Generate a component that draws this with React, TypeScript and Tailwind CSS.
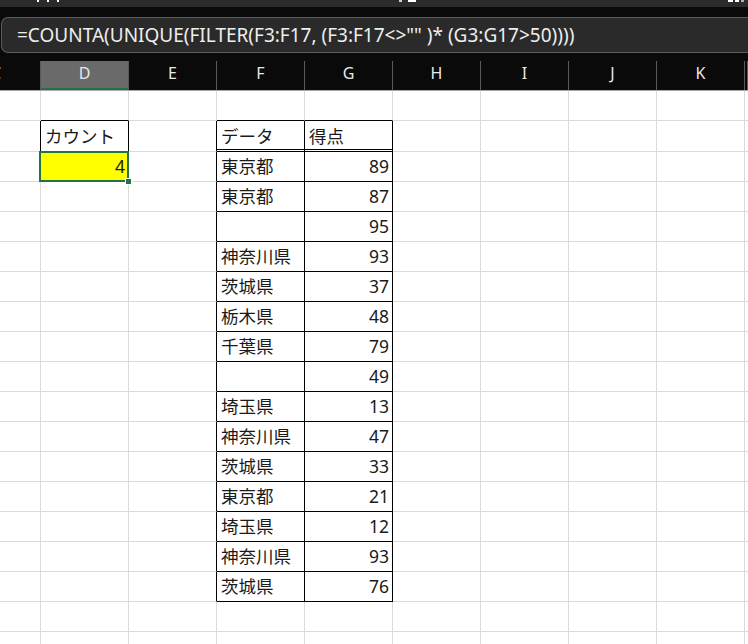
import React from "react";

const data: [string, number][] = [
  ["東京都", 89],
  ["東京都", 87],
  ["", 95],
  ["神奈川県", 93],
  ["茨城県", 37],
  ["栃木県", 48],
  ["千葉県", 79],
  ["", 49],
  ["埼玉県", 13],
  ["神奈川県", 47],
  ["茨城県", 33],
  ["東京都", 21],
  ["埼玉県", 12],
  ["神奈川県", 93],
  ["茨城県", 76],
];

const headers = ["C", "D", "E", "F", "G", "H", "I", "J", "K", "L"];
const ROWS = 19;

function Cell({ r, c }: { r: number; c: number }) {
  const inTable = (c === 3 || c === 4) && r >= 1 && r <= 16;
  const rightBlack =
    ((c === 2 || c === 3 || c === 4) && r >= 1 && r <= 16) ||
    ((c === 0 || c === 1) && r === 1);
  const bottomBlack =
    ((c === 3 || c === 4) && r >= 0 && r <= 16) || (c === 1 && (r === 0 || r === 1));
  const dbl = (c === 3 || c === 4) && r === 1;

  let text: React.ReactNode = null;
  let right = false;
  if (c === 1 && r === 1) text = "カウント";
  if (c === 1 && r === 2) {
    text = "4";
    right = true;
  }
  if (c === 3 && r === 1) text = "データ";
  if (c === 4 && r === 1) text = "得点";
  if (inTable && r >= 2) {
    const d = data[r - 2];
    if (c === 3) text = d[0];
    else {
      text = d[1];
      right = true;
    }
  }
  const selected = c === 1 && r === 2;

  return (
    <div
      className={[
        "relative flex items-end border-r border-b",
        rightBlack ? "border-r-black" : "border-r-[#dadada]",
        bottomBlack ? "border-b-black" : "border-b-[#dadada]",
        dbl ? "border-b-[3px] border-double pb-[4px]" : "pb-[6px]",
        right ? "justify-end pr-[3px]" : "justify-start pl-[4px]",
        selected ? "bg-[#ffff00]" : "",
      ].join(" ")}
    >
      <span className="leading-none text-[17.5px] text-[#1a1a1a] whitespace-nowrap">{text}</span>
      {selected && (
        <>
          <div className="absolute z-10 -left-[2px] -top-[1px] -right-[1px] -bottom-[1px] border-2 border-[#217346] pointer-events-none" />
          <div className="absolute z-20 -right-[4px] -bottom-[4px] w-[7px] h-[7px] bg-[#217346] border border-white" />
        </>
      )}
    </div>
  );
}

export default function App() {
  const rowHeights = Array.from({ length: ROWS }, (_, i) => (i === 1 ? "31px" : "30px"));
  return (
    <div
      className="w-[748px] h-[644px] overflow-hidden bg-white"
      style={{ fontFamily: '"Noto Sans", "Noto Sans CJK JP", sans-serif' }}
    >
      {/* top strip (bottoms of cut-off ribbon labels) */}
      <div className="h-[7px] bg-[#2b2b2b] flex items-start">
        <div className="ml-[37px] flex gap-[8px]">
          <div className="w-[2px] h-[2px] bg-white" />
          <div className="w-[2px] h-[2px] bg-white" />
          <div className="w-[2px] h-[2px] bg-white" />
        </div>
        <div className="ml-[340px] flex gap-[6px]">
          <div className="w-[3px] h-[2px] bg-[#d0d0d0]" />
          <div className="w-[8px] h-[2px] bg-white" />
        </div>
        <div className="ml-auto mr-[4px] flex gap-[2px]">
          <div className="w-[5px] h-[2px] bg-white" />
          <div className="w-[4px] h-[2px] bg-white" />
          <div className="w-[3px] h-[2px] bg-[#b0b0b0]" />
        </div>
      </div>
      {/* formula bar */}
      <div className="bg-[#0a0a0a] pt-[10px] pb-[8px] pl-[1px]">
        <div className="h-[36px] rounded-l-[7px] border border-r-0 border-[#5c5c5c] bg-[#2a2a2a] flex items-center pl-[15px] text-[19px] text-[#eeeeee] whitespace-nowrap">
          =COUNTA(UNIQUE(FILTER(F3:F17, (F3:F17&lt;&gt;"" )* (G3:G17&gt;50))))
        </div>
      </div>
      {/* column headers */}
      <div className="grid grid-cols-[41px_repeat(8,88px)_1fr] h-[30px] bg-[#0a0a0a] border-b border-[#a8a8a8]">
        {headers.map((h, i) => (
          <div
            key={h}
            className={[
              "relative overflow-hidden flex items-center pb-[5px] text-[16px] text-[#e8e8e8]",
              i === 0 ? "justify-end" : "justify-center",
              i === 1 ? "bg-[#6a6a6a]" : "",
              "border-r border-[#5a5a5a]",
            ].join(" ")}
          >
            {i === 0 ? <span className="shrink-0 w-[88px] text-center">{h}</span> : i === 9 ? null : h}
            {i === 1 && <div className="absolute left-0 right-0 bottom-0 h-[2px] bg-[#217346]" />}
          </div>
        ))}
      </div>
      {/* grid */}
      <div
        className="grid grid-cols-[41px_repeat(8,88px)_1fr]"
        style={{ gridTemplateRows: rowHeights.join(" ") }}
      >
        {Array.from({ length: ROWS }).map((_, r) =>
          headers.map((_, c) => <Cell key={`${r}-${c}`} r={r} c={c} />)
        )}
      </div>
    </div>
  );
}
